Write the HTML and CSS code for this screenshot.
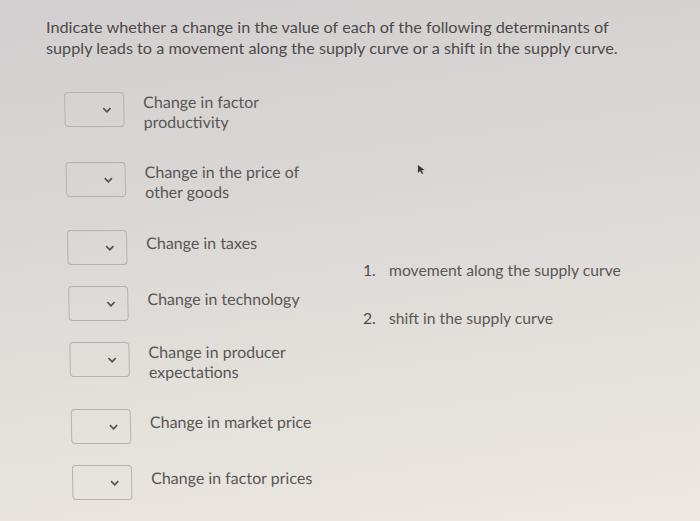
FILE: index.html
```html
<!DOCTYPE html>
<html lang="en">
<head>
<meta charset="utf-8">
<title>Determinants of supply</title>
<link rel="stylesheet" href="styles.css">
</head>
<body>
<div class="page">
  <p class="prompt">Indicate whether a change in the value of each of the following determinants of supply leads to a movement along the supply curve or a shift in the supply curve.</p>
  <div class="main">
    <ul class="items">
      <li class="row two first"><span class="select"><svg class="chev" viewBox="0 0 10 6"><path d="M1 1 L5 5 L9 1"/></svg></span><span class="label">Change in factor<br>productivity</span></li>
      <li class="row two"><span class="select"><svg class="chev" viewBox="0 0 10 6"><path d="M1 1 L5 5 L9 1"/></svg></span><span class="label">Change in the price of<br>other goods</span></li>
      <li class="row"><span class="select"><svg class="chev" viewBox="0 0 10 6"><path d="M1 1 L5 5 L9 1"/></svg></span><span class="label">Change in taxes</span></li>
      <li class="row"><span class="select"><svg class="chev" viewBox="0 0 10 6"><path d="M1 1 L5 5 L9 1"/></svg></span><span class="label">Change in technology</span></li>
      <li class="row two short"><span class="select"><svg class="chev" viewBox="0 0 10 6"><path d="M1 1 L5 5 L9 1"/></svg></span><span class="label">Change in producer<br>expectations</span></li>
      <li class="row"><span class="select"><svg class="chev" viewBox="0 0 10 6"><path d="M1 1 L5 5 L9 1"/></svg></span><span class="label">Change in market price</span></li>
      <li class="row"><span class="select"><svg class="chev" viewBox="0 0 10 6"><path d="M1 1 L5 5 L9 1"/></svg></span><span class="label">Change in factor prices</span></li>
    </ul>
    <ol class="options">
      <li><span class="num">1.</span><span>movement along the supply curve</span></li>
      <li><span class="num">2.</span><span>shift in the supply curve</span></li>
    </ol>
  </div>
  <svg class="cursor" viewBox="0 0 10 12"><path d="M1 1 L1 10 L3.5 7.6 L5.5 11 L7 10.2 L5 6.8 L8.5 6.6 Z"/></svg>
</div>
</body>
</html>
```
FILE: styles.css
```css
html, body {
  margin: 0;
  padding: 0;
}
body {
  width: 700px;
  height: 521px;
  overflow: hidden;
  background: linear-gradient(172deg, #d3cfd0 0%, #dad6d5 35%, #e4e0db 70%, #ede8e0 100%);
  font-family: Lato, "Open Sans", sans-serif;
}
.page {
  position: relative;
  height: 521px;
  padding: 16px 0 0 46px;
  box-sizing: border-box;
}
.prompt {
  margin: 0;
  width: 600px;
  font-size: 16.25px;
  line-height: 21px;
  color: #4d4949;
}
.main {
  display: flex;
  margin-top: 34px;
}
.items {
  list-style: none;
  margin: 0;
  padding: 0 0 0 18px;
  width: 299px;
  display: flex;
  flex-direction: column;
  gap: 21px;
  transform: skewX(1.2deg);
  transform-origin: top left;
}
.row {
  display: flex;
  align-items: flex-start;
  gap: 19px;
}
.row.two {
  min-height: 47px;
}
.row.first {
  min-height: 49px;
}
.row.short {
  min-height: 46px;
}
.select {
  flex: none;
  width: 60px;
  height: 35px;
  border: 1px solid #b7b2b1;
  border-radius: 4px;
  display: flex;
  align-items: center;
  justify-content: flex-end;
  padding-right: 12px;
  box-sizing: border-box;
}
.chev {
  width: 9px;
  height: 6px;
  fill: none;
  stroke: #555152;
  stroke-width: 1.9;
}
.label {
  font-size: 16px;
  line-height: 20px;
  color: #5a5656;
  padding-top: 0;
}
.row:not(.two) .label {
  padding-top: 3px;
}
.options {
  list-style: none;
  margin: 0;
  padding: 168px 0 0 0;
  display: flex;
  flex-direction: column;
  gap: 28px;
}
.options li {
  display: flex;
  font-size: 15.7px;
  line-height: 20px;
  color: #5a5656;
}
.num {
  width: 26px;
  color: #4f4b4b;
}
.cursor {
  position: absolute;
  left: 417px;
  top: 164px;
  width: 9px;
  height: 11px;
  fill: #3c393a;
}
```
